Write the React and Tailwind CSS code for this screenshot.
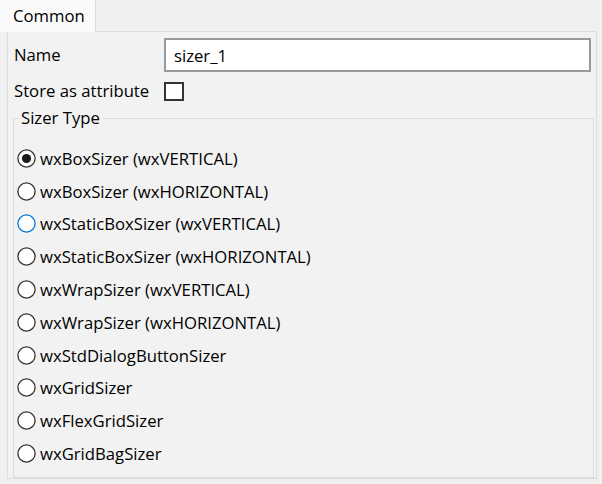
import { useState } from 'react'

const SIZERS = [
  'wxBoxSizer (wxVERTICAL)',
  'wxBoxSizer (wxHORIZONTAL)',
  'wxStaticBoxSizer (wxVERTICAL)',
  'wxStaticBoxSizer (wxHORIZONTAL)',
  'wxWrapSizer (wxVERTICAL)',
  'wxWrapSizer (wxHORIZONTAL)',
  'wxStdDialogButtonSizer',
  'wxGridSizer',
  'wxFlexGridSizer',
  'wxGridBagSizer',
]

function Radio({ checked, hover }) {
  return (
    <svg width="19" height="19" viewBox="0 0 19 19" className="shrink-0">
      <circle cx="9.5" cy="9.5" r="8.6" fill="#fff" stroke={hover ? '#0078d7' : '#333'} strokeWidth="1.3" />
      {checked && <circle cx="9.5" cy="9.5" r="4.6" fill="#1a1a1a" />}
    </svg>
  )
}

export default function App() {
  const [selected, setSelected] = useState(0)
  const [name, setName] = useState('sizer_1')

  return (
    <div
      className="w-[602px] h-[484px] bg-[#f0f0f0] overflow-hidden text-[16.7px] text-black"
      style={{ fontFamily: '"Open Sans", sans-serif' }}
    >
      {/* Tab strip */}
      <div className="flex h-[32px]">
        <div className="w-[96px] h-[32px] bg-[#fafafa] border-r border-[#d9d9d9] pl-[13px] pt-[3px] relative z-10">
          Common
        </div>
      </div>

      {/* Page */}
      <div className="ml-[7px] -mt-px w-[590px] h-[448px] bg-[#f2f2f2] border border-[#dcdcdc] px-[5px] pt-[6px]">
        <div className="flex items-center h-[34px]">
          <span className="w-[151px] pl-px">Name</span>
          <input
            value={name}
            onChange={(e) => setName(e.target.value)}
            className="w-[427px] h-[34px] bg-white border-2 border-[#9a9a9a] px-[8px] outline-none"
          />
        </div>

        <div className="flex items-center h-[30px] mt-[4px]">
          <span className="w-[151px] pl-px">Store as attribute</span>
          <span className="w-[20px] h-[19px] bg-white border-2 border-[#333]" />
        </div>

        <fieldset className="mt-[2px] w-[581px] h-[370px] border border-[#dcdcdc] pl-[3px]">
          <legend className="ml-px px-[3px] leading-[20px]">Sizer Type</legend>
          <div className="flex flex-col mt-[14px]">
            {SIZERS.map((label, i) => (
              <label
                key={label}
                className="flex items-center gap-[4px] h-[32.8px] cursor-default"
                onClick={() => setSelected(i)}
              >
                <Radio checked={selected === i} hover={i === 2} />
                <span>{label}</span>
              </label>
            ))}
          </div>
        </fieldset>
      </div>
    </div>
  )
}
